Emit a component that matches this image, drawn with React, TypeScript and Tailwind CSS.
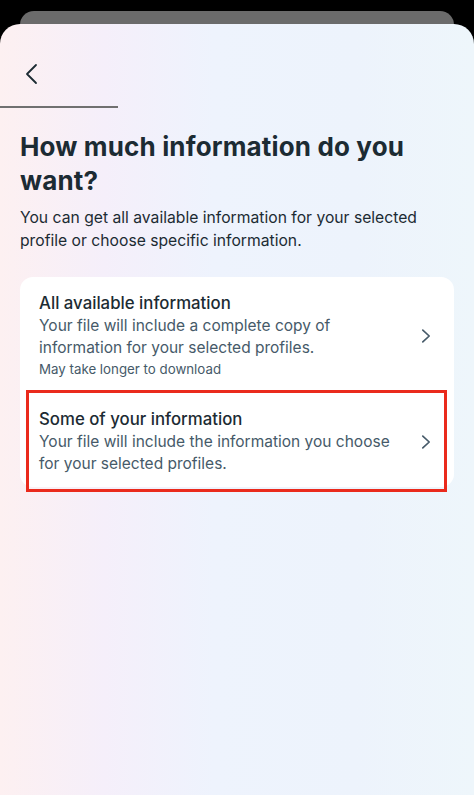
import React from 'react';

function Chevron({ dir = 'right', className = '' }: { dir?: 'left' | 'right'; className?: string }) {
  return (
    <svg viewBox="0 0 24 24" className={className} fill="none" stroke="currentColor" strokeWidth={1.8} strokeLinecap="round" strokeLinejoin="round">
      {dir === 'left' ? <path d="M16 3 7 12l9 9" /> : <path d="m8.5 5.5 7 6.5-7 6.5" />}
    </svg>
  );
}

const options = [
  {
    title: 'All available information',
    desc: 'Your file will include a complete copy of information for your selected profiles.',
    note: 'May take longer to download',
  },
  {
    title: 'Some of your information',
    desc: 'Your file will include the information you choose for your selected profiles.',
    highlight: true,
  },
];

export default function App() {
  return (
    <div className="h-[795px] w-[474px] overflow-hidden bg-black pt-[11px] font-['Inter',sans-serif]">
      <div className="mx-[20px] h-[20px] rounded-t-[14px] bg-[#6b6b6b]" />
      <div className="-mt-[7px] h-[771px] rounded-t-[20px] bg-[linear-gradient(90deg,#fdf0f1_0%,#f5effa_22%,#eef3fd_45%,#edf3fc_75%,#eef6fb_100%)]">
        <div className="flex h-[82px] items-center pl-[20px] pt-[17px] text-[#1c2b33]">
          <Chevron dir="left" className="h-[24px] w-[24px]" />
        </div>
        <div className="h-[2px] w-[118px] bg-[#707070]" />

        <div className="px-[20px] pt-[22px]">
          <h1 className="text-[26px] font-bold leading-[34px] tracking-[0.15px] text-[#1c2b33]">
            How much information do you want?
          </h1>
          <p className="mt-[8px] text-[15.7px] leading-[23px] text-[#1c2b33]">
            You can get all available information for your selected profile or choose specific information.
          </p>

          <div className="relative mt-[25px] rounded-[13px] bg-white">
            {options.map((o) => (
              <div key={o.title} className={`relative flex items-center pl-[19px] pr-[17px] ${o.highlight ? 'pt-[18px] pb-[12px]' : 'pt-[15px] pb-[11px]'}`}>
                <div className="flex-1">
                  <div className="text-[16.8px] font-medium leading-[23px] text-[#1c2b33]">{o.title}</div>
                  <div className="text-[15.5px] leading-[22px] text-[#465a69]">{o.desc}</div>
                  {o.note && <div className="mt-[1px] text-[13.3px] leading-[19px] text-[#465a69]">{o.note}</div>}
                </div>
                <Chevron className="ml-[12px] h-[22px] w-[22px] shrink-0 text-[#465a69]" />
                {o.highlight && (
                  <div className="pointer-events-none absolute -bottom-[5px] left-[6px] right-[7px] top-[0px] border-[3.5px] border-[#ea2a1c]" />
                )}
              </div>
            ))}
          </div>
        </div>
      </div>
    </div>
  );
}
